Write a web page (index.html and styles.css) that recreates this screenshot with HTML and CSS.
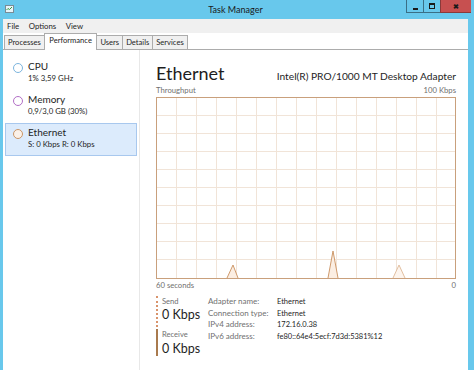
FILE: index.html
```html
<!DOCTYPE html>
<html>
<head>
    <title>Task Manager</title>
    <link rel="stylesheet" href="styles.css">
</head>
<body>
    <div class="window">
        <div class="titlebar">
            <svg class="app-icon" width="9" height="8" viewBox="0 0 9 8">
                <rect x="0.5" y="0.5" width="8" height="7" fill="#e6f4fa" stroke="#7a8c96"/>
                <polyline points="1.5,5 3,3.5 4.5,4.5 7,2" fill="none" stroke="#3f9b3f"/>
            </svg>
            <span class="title">Task Manager</span>
            <div class="win-buttons">
                <div class="wbtn"><span class="min-glyph"></span></div>
                <div class="wbtn"><span class="max-glyph"></span></div>
                <div class="wbtn close">&#x2716;</div>
            </div>
        </div>

        <div class="menubar">
            <span>File</span>
            <span>Options</span>
            <span>View</span>
        </div>

        <div class="tabs">
            <div class="tab">Processes</div>
            <div class="tab active">Performance</div>
            <div class="tab">Users</div>
            <div class="tab">Details</div>
            <div class="tab">Services</div>
        </div>

        <div class="main">
            <div class="sidebar">
                <div class="item">
                    <span class="dot cpu"></span>
                    <div>
                        <div class="item-name">CPU</div>
                        <div class="item-sub">1% 3,59 GHz</div>
                    </div>
                </div>
                <div class="item">
                    <span class="dot mem"></span>
                    <div>
                        <div class="item-name">Memory</div>
                        <div class="item-sub">0,9/3,0 GB (30%)</div>
                    </div>
                </div>
                <div class="item selected">
                    <span class="dot eth"></span>
                    <div>
                        <div class="item-name">Ethernet</div>
                        <div class="item-sub">S: 0 Kbps R: 0 Kbps</div>
                    </div>
                </div>
            </div>

            <div class="content">
                <div class="header">
                    <h1>Ethernet</h1>
                    <span class="adapter">Intel(R) PRO/1000 MT Desktop Adapter</span>
                </div>
                <div class="axis">
                    <span>Throughput</span>
                    <span>100 Kbps</span>
                </div>
                <svg class="graph" width="300" height="182" viewBox="0 0 300 182">
                    <g stroke="#f1e4d8" stroke-width="1">
                        <line x1="20.5" y1="0" x2="20.5" y2="182"/>
                        <line x1="40.5" y1="0" x2="40.5" y2="182"/>
                        <line x1="60.5" y1="0" x2="60.5" y2="182"/>
                        <line x1="80.5" y1="0" x2="80.5" y2="182"/>
                        <line x1="100.5" y1="0" x2="100.5" y2="182"/>
                        <line x1="120.5" y1="0" x2="120.5" y2="182"/>
                        <line x1="140.5" y1="0" x2="140.5" y2="182"/>
                        <line x1="160.5" y1="0" x2="160.5" y2="182"/>
                        <line x1="180.5" y1="0" x2="180.5" y2="182"/>
                        <line x1="200.5" y1="0" x2="200.5" y2="182"/>
                        <line x1="220.5" y1="0" x2="220.5" y2="182"/>
                        <line x1="240.5" y1="0" x2="240.5" y2="182"/>
                        <line x1="260.5" y1="0" x2="260.5" y2="182"/>
                        <line x1="280.5" y1="0" x2="280.5" y2="182"/>
                        <line x1="0" y1="18.5" x2="300" y2="18.5"/>
                        <line x1="0" y1="36.5" x2="300" y2="36.5"/>
                        <line x1="0" y1="54.5" x2="300" y2="54.5"/>
                        <line x1="0" y1="72.5" x2="300" y2="72.5"/>
                        <line x1="0" y1="90.5" x2="300" y2="90.5"/>
                        <line x1="0" y1="108.5" x2="300" y2="108.5"/>
                        <line x1="0" y1="126.5" x2="300" y2="126.5"/>
                        <line x1="0" y1="144.5" x2="300" y2="144.5"/>
                        <line x1="0" y1="162.5" x2="300" y2="162.5"/>
                    </g>
                    <g fill="#fbeee3" stroke="#cf9a6c" stroke-width="1">
                        <polyline points="71,181 77,168 82,181"/>
                        <polyline points="172,181 177,154 182,181"/>
                    </g>
                    <polyline points="237,181 243,168 249,181" fill="#fdf5ee" stroke="#e2bfa0" stroke-width="1"/>
                    <rect x="0.5" y="0.5" width="299" height="181" fill="none" stroke="#c9a07c"/>
                </svg>
                <div class="axis bottom">
                    <span>60 seconds</span>
                    <span>0</span>
                </div>

                <div class="stats">
                    <div class="rates">
                        <div class="rate send">
                            <div class="rate-label">Send</div>
                            <div class="rate-value">0 Kbps</div>
                        </div>
                        <div class="rate receive">
                            <div class="rate-label">Receive</div>
                            <div class="rate-value">0 Kbps</div>
                        </div>
                    </div>
                    <div class="details">
                        <span class="label">Adapter name:</span><span class="value">Ethernet</span>
                        <span class="label">Connection type:</span><span class="value">Ethernet</span>
                        <span class="label">IPv4 address:</span><span class="value">172.16.0.38</span>
                        <span class="label">IPv6 address:</span><span class="value">fe80::64e4:5ecf:7d3d:5381%12</span>
                    </div>
                </div>
            </div>
        </div>
    </div>
</body>
</html>
```

FILE: styles.css
```css
body {
    margin: 0;
    font-family: Lato, "Noto Sans", sans-serif;
    color: #1e1e1e;
    background-color: #fff;
}

.window {
    width: 474px;
    height: 370px;
    background-color: #68c8ec;
    padding: 0 6px 0 3px;
    box-sizing: border-box;
    display: flex;
    flex-direction: column;
    overflow: hidden;
    white-space: nowrap;
}

/* Title bar */
.titlebar {
    height: 19px;
    display: flex;
    align-items: center;
    position: relative;
    flex-shrink: 0;
}

.app-icon {
    margin-left: 2px;
    margin-top: -2px;
}

.title {
    position: absolute;
    left: 0;
    right: 0;
    top: 4px;
    text-align: center;
    font-size: 9px;
    line-height: 11px;
    color: #1a1a1a;
}

.win-buttons {
    position: absolute;
    top: 0;
    right: -3px;
    display: flex;
}

.wbtn {
    width: 17px;
    height: 13px;
    border: 1px solid #3a6f86;
    border-top: none;
    border-right: none;
    box-sizing: border-box;
    display: flex;
    align-items: center;
    justify-content: center;
}

.wbtn.close {
    width: 31px;
    background-color: #c75050;
    border-color: #8a3a3a;
    color: #1a1a1a;
    font-size: 7px;
    font-weight: bold;
}

.min-glyph {
    width: 5px;
    height: 2px;
    background-color: #1a1a1a;
    margin-top: 5px;
}

.max-glyph {
    width: 4px;
    height: 3px;
    border: 1px solid #1a1a1a;
    border-top-width: 2px;
}

/* Menu */
.menubar {
    height: 14px;
    background-color: #f0f0f0;
    display: flex;
    align-items: center;
    gap: 9.5px;
    padding-left: 4px;
    font-size: 7.8px;
    flex-shrink: 0;
}

/* Tabs */
.tabs {
    height: 16px;
    background-color: #fff;
    display: flex;
    align-items: flex-end;
    padding-left: 1px;
    border-bottom: 1px solid #acacac;
    flex-shrink: 0;
}

.tab {
    height: 13px;
    padding: 0 3px;
    font-size: 7.6px;
    line-height: 13px;
    background-color: #f0f0f0;
    border: 1px solid #acacac;
    border-bottom: none;
    margin-right: -1px;
}

.tab.active {
    height: 16px;
    background-color: #fff;
    padding: 0 4.5px;
    line-height: 13px;
    margin-bottom: -1px;
    position: relative;
}

/* Main */
.main {
    flex: 1;
    display: flex;
    background-color: #fff;
    min-height: 0;
}

.sidebar {
    width: 137px;
    box-sizing: border-box;
    border-right: 1px solid #e8e8e8;
    padding: 7px 2px 0 2px;
    flex-shrink: 0;
}

.item {
    display: flex;
    align-items: flex-start;
    gap: 5px;
    height: 33px;
    padding-left: 7px;
    border: 1px solid transparent;
    box-sizing: border-box;
}

.item.selected {
    background-color: #dcebfc;
    border-color: #a8c8ee;
}

.dot {
    width: 8px;
    height: 8px;
    border-radius: 50%;
    border: 1px solid;
    background-color: #fff;
    margin-top: 5px;
    flex-shrink: 0;
}

.dot.cpu { border-color: #7cb5de; }
.dot.mem { border-color: #b26fc6; }
.dot.eth { border-color: #c99567; background-color: #fbf1e8; }

.item-name {
    font-size: 10px;
    line-height: 13px;
    margin-top: 2px;
}

.item-sub {
    font-size: 7.8px;
    line-height: 10px;
}

/* Content */
.content {
    flex: 1;
    padding: 12px 13px 0 16px;
}

.header {
    display: flex;
    justify-content: space-between;
    align-items: baseline;
    height: 22px;
}

h1 {
    margin: 0;
    font-size: 18px;
    font-weight: normal;
    line-height: 22px;
}

.adapter {
    font-size: 10.2px;
}

.axis {
    display: flex;
    justify-content: space-between;
    font-size: 7.7px;
    color: #707070;
    line-height: 9px;
    margin-top: 2px;
}

.graph {
    display: block;
    margin-top: 2px;
}

.axis.bottom {
    margin-top: 2px;
}

/* Stats */
.stats {
    display: flex;
    margin-top: 6px;
}

.rates {
    width: 52px;
    flex-shrink: 0;
}

.rate {
    padding-left: 4px;
    border-left: 2px solid;
}

.rate.send {
    border-left: 2px dotted #d9946c;
    height: 31px;
}

.rate.receive {
    border-color: #a97a4e;
    margin-top: 2px;
    height: 27px;
}

.rate-label {
    font-size: 7.6px;
    color: #707070;
    line-height: 10px;
}

.rate-value {
    font-size: 12.5px;
    line-height: 16px;
    margin-top: 1px;
}

.rate.receive .rate-value {
    margin-top: 2px;
}

.details {
    display: grid;
    grid-template-columns: 69px auto;
    font-size: 8px;
    line-height: 11.7px;
    align-content: start;
}

.label {
    color: #707070;
}

.value {
    color: #1e1e1e;
    font-size: 7.5px;
}
```
